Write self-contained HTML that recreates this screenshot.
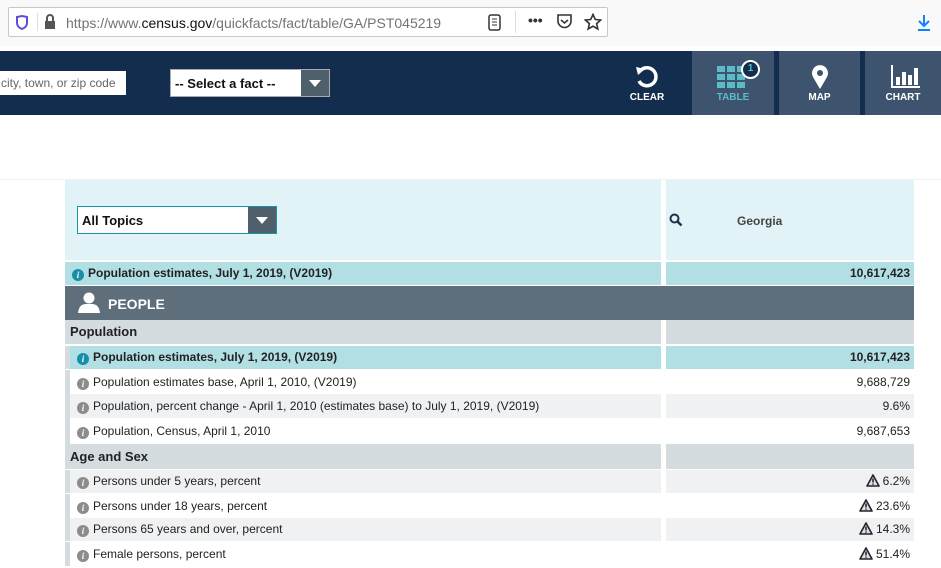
<!DOCTYPE html>
<html><head><meta charset="utf-8"><style>
*{margin:0;padding:0;box-sizing:border-box}
body{width:941px;height:568px;overflow:hidden;background:#fff;font-family:"Liberation Sans",Arial,sans-serif;position:relative}
.a{position:absolute}
.url{left:8px;top:7px;width:600px;height:30px;border:1px solid #c8c8cc;border-radius:2px;background:#fff}
.nav{left:0;top:51px;width:941px;height:64px;background:#132d4f}
.btn{top:51px;height:64px;background:#3e536e;color:#fff;font-size:10px;font-weight:bold;text-align:center}
.btn span{position:absolute;left:0;right:0;top:41px}
.row{position:absolute;left:65px;width:849px;height:24px;font-size:12px;color:#222}
.row .l{position:absolute;left:5px;top:0;width:591px;height:100%;padding-left:7px;line-height:24px}
.row .r{position:absolute;left:601px;top:0;width:248px;height:100%;text-align:right;padding-right:4px;line-height:24px}
.row .stub{position:absolute;left:0;top:0;width:5px;height:100%;background:#d5dcdf}
.i{display:inline-block;width:12px;height:12px;border-radius:50%;background:#8c8c8c;color:#fff;font-size:9px;font-style:italic;font-weight:bold;font-family:"Liberation Serif",serif;text-align:center;line-height:12px;margin-right:4px;vertical-align:-1px}
.g{background:#f0f1f3}
.t{background:#b2dfe4;font-weight:bold}
.t .i{background:#178fa8}
.sub{font-size:13px;font-weight:bold}
.sub .l,.sub .r{background:#d5dcdf}
.w{display:inline-block;vertical-align:-2px;margin-right:3px}
</style></head><body>
<div class="a" style="left:0;top:0;width:941px;height:46px;background:#f9f9fa"></div>
<div class="a url"></div>
<svg class="a" style="left:15px;top:15px" width="14" height="15" viewBox="0 0 14 15"><path d="M2 2 L7 1 L12 2 L12 8 Q12 12 7 14 Q2 12 2 8Z" fill="none" stroke="#5b4fd6" stroke-width="2"/></svg>
<svg class="a" style="left:44px;top:14px" width="12" height="16"><rect x="1" y="7" width="10" height="8" fill="#555"/><path d="M3 7V4a3 3 0 0 1 6 0v3" fill="none" stroke="#555" stroke-width="2"/></svg>
<div class="a" style="left:37px;top:13px;width:1px;height:18px;background:#ddd"></div>
<div class="a" style="left:66px;top:15px;font-size:14px;color:#737373">https://www.<span style="color:#111">census.gov</span>/quickfacts/fact/table/GA/PST045219</div>
<svg class="a" style="left:488px;top:14px" width="14" height="17"><rect x="1" y="1" width="11" height="15" rx="2" fill="none" stroke="#333" stroke-width="1.5"/><path d="M4 5h5M4 8h5M4 11h5" stroke="#333"/></svg>
<div class="a" style="left:515px;top:11px;width:1px;height:22px;background:#ddd"></div>
<div class="a" style="left:528px;top:12px;font-size:14px;color:#333;font-weight:bold">•••</div>
<svg class="a" style="left:556px;top:13px" width="17" height="17"><path d="M2 2h13v6a6.5 6.5 0 0 1-13 0z" fill="none" stroke="#333" stroke-width="1.6"/><path d="M5 7l3.5 3 3.5-3" fill="none" stroke="#333" stroke-width="1.6"/></svg>
<svg class="a" style="left:584px;top:13px" width="18" height="18"><path d="M9 1.5l2.3 5 5.4.5-4.1 3.6 1.2 5.4L9 13.2 4.2 16l1.2-5.4L1.3 7l5.4-.5z" fill="none" stroke="#333" stroke-width="1.6"/></svg>
<svg class="a" style="left:917px;top:14px" width="14" height="18"><path d="M7 1v11M2 7l5 5 5-5M1 16h12" fill="none" stroke="#0a84ff" stroke-width="2"/></svg>

<div class="a nav"></div>
<div class="a" style="left:0;top:71px;width:126px;height:24px;background:#fff;font-size:12px;color:#666;line-height:24px;padding-left:1px">city, town, or zip code</div>
<div class="a" style="left:170px;top:69px;width:160px;height:28px;background:#fff;border:1px solid #aaa"><span style="position:absolute;left:4px;top:6px;font-size:13px;color:#111;font-weight:bold">-- Select a fact --</span><div style="position:absolute;right:0;top:0;width:28px;height:26px;background:#4f5f6b"><div style="position:absolute;left:8px;top:10px;border-left:6px solid transparent;border-right:6px solid transparent;border-top:7px solid #fff"></div></div></div>
<div class="a" style="left:619px;top:51px;width:56px;height:64px;color:#fff;font-size:10px;font-weight:bold;text-align:center">
<svg style="position:absolute;left:16px;top:14px" width="24" height="24"><path d="M5 6 A9 9 0 1 1 4 16" fill="none" stroke="#fff" stroke-width="3.5"/><path d="M1 2 L10 4 L3 10Z" fill="#fff"/></svg><span style="position:absolute;left:0;right:0;top:41px">CLEAR</span></div>
<div class="a btn" style="left:692px;width:82px;color:#5bbcc8"><svg style="position:absolute;left:25px;top:15px" width="30" height="22"><g fill="#5bbcc8"><rect x="0" y="0" width="8" height="6"/><rect x="10" y="0" width="8" height="6"/><rect x="20" y="0" width="8" height="6"/><rect x="0" y="8" width="8" height="6"/><rect x="10" y="8" width="8" height="6"/><rect x="20" y="8" width="8" height="6"/><rect x="0" y="16" width="8" height="6"/><rect x="10" y="16" width="8" height="6"/><rect x="20" y="16" width="8" height="6"/></g></svg><div style="position:absolute;left:49px;top:9px;width:19px;height:19px;border-radius:50%;background:#132d4f;border:2.5px solid #fff;color:#5bbcc8;font-size:10px;line-height:14px">1</div><span>TABLE</span></div>
<div class="a btn" style="left:779px;width:81px"><svg style="position:absolute;left:32px;top:14px" width="18" height="25"><path d="M9 24 L2 12 A8 8 0 1 1 16 12Z" fill="#fff"/><circle cx="9" cy="8" r="3" fill="#3e536e"/></svg><span>MAP</span></div>
<div class="a btn" style="left:865px;width:76px"><svg style="position:absolute;left:26px;top:14px" width="30" height="24"><path d="M1 0v22h28" fill="none" stroke="#fff" stroke-width="2"/><g fill="#fff"><rect x="5" y="12" width="4" height="8"/><rect x="11" y="7" width="4" height="13"/><rect x="17" y="10" width="4" height="10"/><rect x="23" y="3" width="4" height="17"/></g></svg><span>CHART</span></div>

<div class="a" style="left:0;top:179px;width:941px;height:1px;background:#eef3f5"></div>
<div class="a" style="left:65px;top:180px;width:596px;height:80px;background:#e2f3f7"></div>
<div class="a" style="left:666px;top:180px;width:248px;height:80px;background:#e2f3f7"></div>
<div class="a" style="left:77px;top:206px;width:200px;height:28px;background:#fff;border:1px solid #1896a8"><span style="position:absolute;left:4px;top:6px;font-size:13px;font-weight:bold;color:#111">All Topics</span><div style="position:absolute;right:0;top:0;width:28px;height:26px;background:#4f5f6b"><div style="position:absolute;left:8px;top:10px;border-left:6px solid transparent;border-right:6px solid transparent;border-top:7px solid #fff"></div></div></div>
<svg class="a" style="left:669px;top:213px" width="14" height="14"><circle cx="5.5" cy="5.5" r="4" fill="none" stroke="#1e3247" stroke-width="2"/><path d="M8.5 8.5l4 4" stroke="#1e3247" stroke-width="2.5"/></svg>
<div class="a" style="left:737px;top:214px;font-size:12px;font-weight:bold;color:#444">Georgia</div>

<div class="row" style="top:262px;height:23px;font-weight:bold"><div class="l t" style="left:0;width:596px;line-height:23px;padding-left:7px"><span class="i">i</span>Population estimates, July 1, 2019, (V2019)</div><div class="r t" style="line-height:23px">10,617,423</div></div>
<div class="a" style="left:65px;top:286px;width:849px;height:34px;background:#5e6f7b;color:#fff;font-weight:bold;font-size:14px"><svg style="position:absolute;left:13px;top:6px" width="22" height="21"><circle cx="11" cy="6" r="5.5" fill="#fff"/><path d="M0 21 Q1 12 8 12 L14 12 Q21 12 22 21Z" fill="#fff"/></svg><span style="position:absolute;left:43px;top:10px">PEOPLE</span></div>
<div class="row sub" style="top:320px"><div class="l" style="left:0;width:596px;padding-left:5px;line-height:24px">Population</div><div class="r"></div></div>

<div class="row" style="top:346px;height:23px"><div class="stub"></div><div class="l t" style="line-height:23px"><span class="i" style="background:#178fa8">i</span>Population estimates, July 1, 2019, (V2019)</div><div class="r t" style="line-height:23px">10,617,423</div></div>
<div class="row" style="top:370px"><div class="stub"></div><div class="l"><span class="i">i</span>Population estimates base, April 1, 2010, (V2019)</div><div class="r">9,688,729</div></div>
<div class="row" style="top:394px"><div class="stub"></div><div class="l g"><span class="i">i</span>Population, percent change - April 1, 2010 (estimates base) to July 1, 2019, (V2019)</div><div class="r g">9.6%</div></div>
<div class="row" style="top:418px;height:26px"><div class="stub"></div><div class="l" style="line-height:26px"><span class="i">i</span>Population, Census, April 1, 2010</div><div class="r" style="line-height:26px">9,687,653</div></div>
<div class="row sub" style="top:444px;height:25px"><div class="l" style="left:0;width:596px;padding-left:5px;line-height:25px">Age and Sex</div><div class="r"></div></div>
<div class="row" style="top:470px;height:23px"><div class="stub"></div><div class="l g" style="line-height:23px"><span class="i">i</span>Persons under 5 years, percent</div><div class="r g" style="line-height:23px"><svg class="w" width="14" height="13"><path d="M7 1L13 12H1Z" fill="#dde" stroke="#222" stroke-width="1.6" stroke-linejoin="round"/><path d="M7 4.5v4M7 9.5v1.2" stroke="#222" stroke-width="1.5"/></svg>6.2%</div></div>
<div class="row" style="top:494px"><div class="stub"></div><div class="l"><span class="i">i</span>Persons under 18 years, percent</div><div class="r"><svg class="w" width="14" height="13"><path d="M7 1L13 12H1Z" fill="#dde" stroke="#222" stroke-width="1.6" stroke-linejoin="round"/><path d="M7 4.5v4M7 9.5v1.2" stroke="#222" stroke-width="1.5"/></svg>23.6%</div></div>
<div class="row" style="top:518px;height:23px"><div class="stub"></div><div class="l g" style="line-height:23px"><span class="i">i</span>Persons 65 years and over, percent</div><div class="r g" style="line-height:23px"><svg class="w" width="14" height="13"><path d="M7 1L13 12H1Z" fill="#dde" stroke="#222" stroke-width="1.6" stroke-linejoin="round"/><path d="M7 4.5v4M7 9.5v1.2" stroke="#222" stroke-width="1.5"/></svg>14.3%</div></div>
<div class="row" style="top:542px"><div class="stub"></div><div class="l"><span class="i">i</span>Female persons, percent</div><div class="r"><svg class="w" width="14" height="13"><path d="M7 1L13 12H1Z" fill="#dde" stroke="#222" stroke-width="1.6" stroke-linejoin="round"/><path d="M7 4.5v4M7 9.5v1.2" stroke="#222" stroke-width="1.5"/></svg>51.4%</div></div>
</body></html>
